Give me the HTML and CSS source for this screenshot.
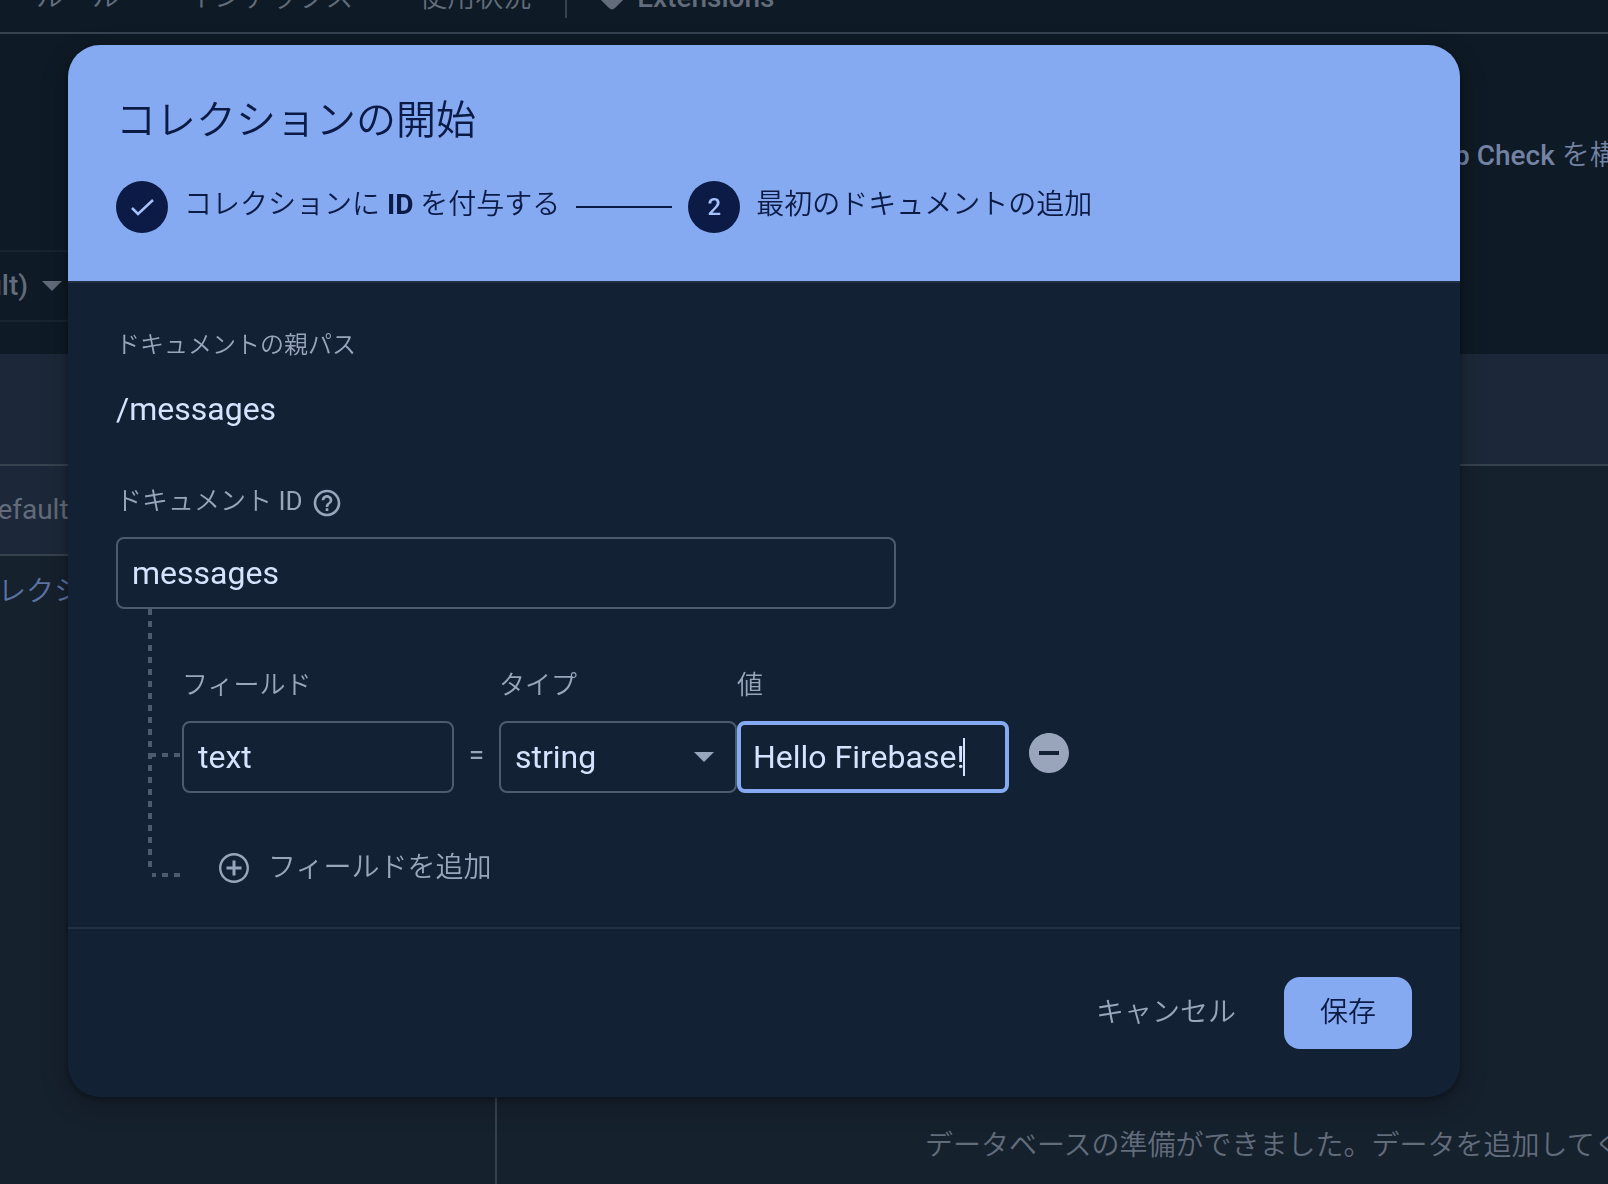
FILE: index.html
```html
<!DOCTYPE html>
<html lang="ja">
<head>
<meta charset="utf-8">
<meta name="viewport" content="width=device-width, initial-scale=1">
<title>コレクションの開始</title>
<link rel="stylesheet" href="styles.css">
</head>
<body>
<div class="console">
  <nav class="tabs">
    <a class="tab" href="#rules">ルール</a>
    <a class="tab" href="#indexes">インデックス</a>
    <a class="tab" href="#usage">使用状況</a>
    <a class="tab tab-extensions" href="#extensions">
      <svg class="tab-icon" viewBox="0 0 24 24" aria-hidden="true"><path d="M2 0h20v14l-7 7q-3 3-6 0l-7-7z"/></svg>
      Extensions
    </a>
  </nav>
  <div class="toolbar">
    <a class="app-check" href="#app-check">App Check を構成</a>
    <button class="database-picker" type="button">
      <span>(default)</span>
      <svg class="caret-icon" viewBox="0 0 20 10" aria-hidden="true"><path d="M0 0h20L10 10z"/></svg>
    </button>
  </div>
  <div class="breadcrumb"></div>
  <div class="panes">
    <section class="pane-root">
      <h2 class="pane-title">(default)</h2>
      <a class="pane-link" href="#start">コレクションを開始</a>
    </section>
    <section class="pane-empty">
      <p class="empty-text">データベースの準備ができました。データを追加してください。</p>
    </section>
  </div>
</div>

<div class="overlay">
  <form class="dialog" role="dialog" aria-labelledby="dialog-title">
    <header class="dialog-header">
      <h1 class="dialog-title" id="dialog-title">コレクションの開始</h1>
      <ol class="stepper">
        <li class="step">
          <span class="step-badge">
            <svg class="check-icon" viewBox="0 0 24 24" aria-label="完了"><path d="M2 13l6 6L23 5"/></svg>
          </span>
          <span class="step-label">コレクションに <b>ID</b> を付与する</span>
        </li>
        <li class="step-line" aria-hidden="true"></li>
        <li class="step">
          <span class="step-badge">2</span>
          <span class="step-label">最初のドキュメントの追加</span>
        </li>
      </ol>
    </header>

    <div class="dialog-body">
      <p class="path-label">ドキュメントの親パス</p>
      <p class="path-value">/messages</p>
      <div class="id-label">
        <label class="label" for="document-id">ドキュメント ID</label>
        <svg class="help-icon" viewBox="0 0 24 24" aria-hidden="true"><path d="M11 18h2v-2h-2v2zm1-16C6.480 2 2 6.480 2 12s4.480 10 10 10 10-4.480 10-10S17.520 2 12 2zm0 18c-4.410 0-8-3.590-8-8s3.590-8 8-8 8 3.590 8 8-3.590 8-8 8zm0-14c-2.210 0-4 1.790-4 4h2c0-1.100.9-2 2-2s2 .9 2 2c0 2-3 1.750-3 5h2c0-2.250 3-2.500 3-5 0-2.210-1.790-4-4-4z"/></svg>
      </div>
      <input class="control document-id" id="document-id" type="text" value="messages">

      <div class="tree">
        <label class="label col-field" for="field-name">フィールド</label>
        <label class="label col-type" for="field-type">タイプ</label>
        <label class="label col-value" for="field-value">値</label>

        <span class="branch" aria-hidden="true"></span>
        <input class="control" id="field-name" type="text" value="text">
        <span class="equals">=</span>
        <div class="select">
          <select class="control" id="field-type">
            <option>string</option>
          </select>
          <svg class="caret-icon" viewBox="0 0 20 10" aria-hidden="true"><path d="M0 0h20L10 10z"/></svg>
        </div>
        <div class="value">
          <input class="control control-active" id="field-value" type="text" value="Hello Firebase!">
          <span class="text-caret" aria-hidden="true"></span>
        </div>
        <button class="remove" type="button" aria-label="フィールドを削除">
          <svg viewBox="0 0 24 24" aria-hidden="true"><path d="M12 2C6.480 2 2 6.480 2 12s4.480 10 10 10 10-4.480 10-10S17.520 2 12 2zm5 11H7v-2h10v2z"/></svg>
        </button>

        <span class="branch branch-last" aria-hidden="true"></span>
        <button class="add" type="button">
          <svg class="add-icon" viewBox="0 0 24 24" aria-hidden="true"><path d="M13 7h-2v4H7v2h4v4h2v-4h4v-2h-4V7zm-1-5C6.480 2 2 6.480 2 12s4.480 10 10 10 10-4.480 10-10S17.520 2 12 2zm0 18.400c-4.600 0-8.400-3.800-8.400-8.400S7.400 3.600 12 3.600s8.400 3.800 8.400 8.400-3.800 8.400-8.400 8.400z"/></svg>
          フィールドを追加
        </button>
      </div>
    </div>

    <footer class="dialog-footer">
      <button class="button" type="button">キャンセル</button>
      <button class="button button-primary" type="submit">保存</button>
    </footer>
  </form>
</div>
</body>
</html>
```

FILE: styles.css
```css
:root {
  --page: #0e1a25;
  --band: #1c2839;
  --pane: #16212e;
  --rule: #37424f;
  --dialog: #122134;
  --dialog-rule: #223042;
  --accent: #86aaf2;
  --navy: #0b1b45;
  --text: #d6e3ff;
  --muted: #98a5bb;
  --outline: #4d5b6f;
}

* {
  box-sizing: border-box;
}

body {
  margin: 0;
  background: var(--page);
  color: var(--muted);
  font: 400 28px/40px Roboto, "Noto Sans CJK JP DemiLight", "Noto Sans CJK JP", sans-serif;
}

h1, h2, p, ol {
  margin: 0;
  padding: 0;
  font-weight: 400;
}

a {
  color: inherit;
  text-decoration: none;
}

button {
  padding: 0;
  border: 0;
  background: none;
  color: inherit;
  font: inherit;
  white-space: nowrap;
}

svg {
  display: block;
  flex: none;
  fill: currentColor;
}

/* Console behind the dialog */

.console {
  display: flex;
  flex-direction: column;
  height: 100vh;
  overflow: hidden;
  color: #626c7b;
  white-space: nowrap;
}

.tabs {
  display: flex;
  flex: none;
  align-items: flex-end;
  gap: 66px;
  height: 34px;
  padding: 0 36px 14px;
  border-bottom: 2px solid var(--rule);
}

.tab-extensions {
  display: flex;
  align-items: center;
  gap: 12px;
  margin-left: -32px;
  padding-left: 32px;
  border-left: 2px solid var(--rule);
  font-weight: 500;
}

.tab-icon {
  width: 26px;
  height: 26px;
}

.toolbar {
  display: flex;
  flex: none;
  flex-direction: column;
  justify-content: space-between;
  height: 320px;
  padding: 102px 0 32px;
}

.app-check {
  align-self: flex-end;
  width: 188px;
  overflow: hidden;
  color: #7482a3;
  font-weight: 500;
}

.database-picker {
  display: flex;
  align-items: center;
  justify-content: flex-end;
  gap: 14px;
  width: 76px;
  height: 72px;
  padding-right: 12px;
  border: solid #182430;
  border-width: 2px 2px 2px 0;
  border-radius: 0 12px 12px 0;
  font-weight: 500;
}

.caret-icon {
  width: 20px;
  height: 10px;
}

.breadcrumb {
  flex: none;
  height: 112px;
  border-bottom: 2px solid var(--rule);
  background: var(--band);
}

.panes {
  display: flex;
  flex: 1;
  background: var(--pane);
}

.pane-root {
  display: flex;
  flex: none;
  flex-direction: column;
  width: 497px;
  border-right: 2px solid var(--rule);
}

.pane-title {
  height: 90px;
  border-bottom: 2px solid var(--rule);
  background: var(--band);
  font-size: 28px;
  line-height: 88px;
  text-indent: -28px;
}

.pane-link {
  color: #5c73a3;
  line-height: 72px;
  text-indent: -30px;
}

.pane-empty {
  display: flex;
  flex: 1;
  align-items: flex-end;
  min-width: 0;
  padding: 0 0 18px 428px;
  overflow: hidden;
}

/* Dialog */

.overlay {
  position: fixed;
  inset: 0;
  padding: 45px 148px 87px 68px;
  overflow: auto;
}

.dialog {
  overflow: hidden;
  border-radius: 32px;
  background: var(--dialog);
  box-shadow: 0 8px 24px 4px rgba(0, 0, 0, .2), 0 2px 6px rgba(0, 0, 0, .35);
}

.dialog-header {
  padding: 48px;
  border-bottom: 2px solid var(--dialog-rule);
  background: var(--accent);
  color: var(--navy);
}

.dialog-title {
  margin-bottom: 32px;
  font-size: 40px;
  line-height: 56px;
}

.stepper {
  display: flex;
  align-items: center;
  gap: 16px;
  list-style: none;
}

.step {
  display: flex;
  align-items: center;
  gap: 16px;
}

.step-badge {
  display: grid;
  place-items: center;
  width: 52px;
  height: 52px;
  border-radius: 50%;
  background: var(--navy);
  color: #a5c1fb;
  font-size: 24px;
  font-weight: 500;
}

.step-label {
  padding-bottom: 4px;
}

.step-label b {
  font-weight: 700;
}

.step-line {
  width: 96px;
  height: 2px;
  background: var(--navy);
}

.check-icon {
  width: 24px;
  height: 24px;
  fill: none;
  stroke: currentColor;
  stroke-width: 2.5;
}

.dialog-body {
  padding: 42px 48px 40px;
}

.path-label {
  margin-bottom: 24px;
  font-size: 24px;
}

.path-value {
  margin-bottom: 52px;
  color: var(--text);
  font-size: 32px;
}

.label {
  font-size: 26px;
}

.id-label {
  display: flex;
  align-items: center;
  gap: 8px;
  margin-bottom: 16px;
}

.help-icon {
  width: 32px;
  height: 32px;
  margin-top: 4px;
}

.control {
  width: 100%;
  height: 72px;
  padding: 0 14px;
  border: 2px solid var(--outline);
  border-radius: 8px;
  outline: 0;
  background: transparent;
  color: var(--text);
  font: inherit;
  font-size: 32px;
  appearance: none;
}

.control-active {
  padding: 0 12px;
  border: 4px solid var(--accent);
}

.document-id {
  display: block;
  max-width: 780px;
}

/* Dashed connectors from the document down to its fields */

.tree {
  display: grid;
  grid-template-columns: 34px 272px 45px 238px 272px 1fr;
  margin: 0 0 -40px 32px;
  padding: 56px 0 39px;
  background: repeating-linear-gradient(var(--outline) 0 6px, transparent 6px 12px) no-repeat 0 0 / 4px calc(100% - 60px);
}

.tree .label {
  margin-bottom: 16px;
}

.col-field {
  grid-column: 2;
}

.col-type {
  grid-column: 4;
}

.col-value {
  grid-column: 5;
}

.branch {
  grid-column: 1;
  width: 28px;
  height: 4px;
  margin: 32px 0 0 4px;
  background: repeating-linear-gradient(to left, var(--outline) 0 6px, transparent 6px 12px);
}

.equals {
  align-self: center;
  padding-bottom: 4px;
  text-align: center;
}

.select {
  display: grid;
  align-items: center;
}

.select > * {
  grid-area: 1 / 1;
}

.select .caret-icon {
  justify-self: end;
  margin-right: 23px;
  pointer-events: none;
}

.value {
  position: relative;
}

.text-caret {
  position: absolute;
  top: 17px;
  left: 226px;
  width: 2px;
  height: 38px;
  background: var(--text);
}

.remove {
  width: 48px;
  height: 48px;
  margin: 8px 16px;
}

.branch-last {
  align-self: end;
  margin-bottom: 11px;
}

.add {
  display: flex;
  grid-column: 2;
  align-items: center;
  gap: 16px;
  margin-top: 55px;
  padding-left: 34px;
}

.add-icon {
  width: 36px;
  height: 36px;
}

.dialog-footer {
  display: flex;
  justify-content: flex-end;
  gap: 16px;
  padding: 48px;
  border-top: 2px solid var(--dialog-rule);
}

.button {
  height: 72px;
  padding: 0 32px;
  border-radius: 16px;
}

.button-primary {
  min-width: 128px;
  background: var(--accent);
  color: var(--navy);
}
```
